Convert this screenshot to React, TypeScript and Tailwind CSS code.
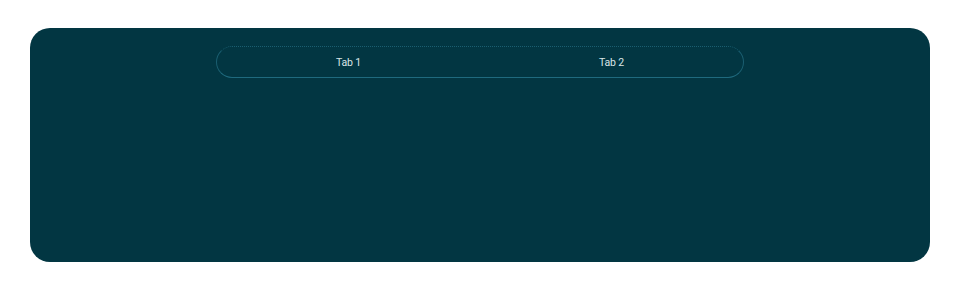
import React, { useState } from 'react';

const tabs = ['Tab 1', 'Tab 2'];

export default function App() {
  const [active, setActive] = useState(0);

  return (
    <div className="w-[960px] h-[298px] bg-white px-[30px] pt-[28px] pb-[36px]" style={{ fontFamily: 'Roboto, "Liberation Sans", sans-serif' }}>
      <div className="h-full rounded-[20px] bg-[#023642] pt-[18px] flex flex-col items-center">
        <div className="w-[528px] h-[32px] flex rounded-full border border-[#1a5e70] border-b-[#1f6a7e] [border-top-style:dotted]">
          {tabs.map((t, i) => (
            <button
              key={t}
              onClick={() => setActive(i)}
              className={`flex-1 flex items-center justify-center pt-px text-[10.5px] tracking-[-0.2px] text-[#dbe6e8] ${active === i ? 'font-normal' : 'font-normal'}`}
            >
              {t}
            </button>
          ))}
        </div>
      </div>
    </div>
  );
}
